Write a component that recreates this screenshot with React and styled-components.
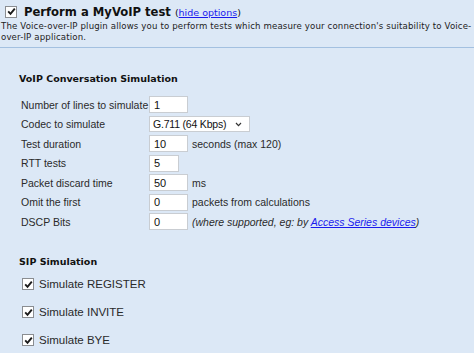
import React from 'react';
import styled, { createGlobalStyle } from 'styled-components';

const Global = createGlobalStyle`
  html, body {
    margin: 0;
    padding: 0;
    background: #dce8f6;
  }
  body {
    font-family: "DejaVu Sans", Verdana, sans-serif;
    color: #222;
  }
`;

const Page = styled.div`
  width: 474px;
  height: 353px;
  overflow: hidden;
  background: #dce8f6;
`;

const Header = styled.div`
  padding: 3px 0 5px 1px;
  border-bottom: 1px solid #a3c0e0;
`;

const TitleRow = styled.div`
  display: flex;
  align-items: center;
  gap: 7px;
  padding-left: 4px;
  height: 17px;
`;

const Title = styled.span`
  font-weight: bold;
  font-size: 11.6px;
  color: #111;
`;

const Small = styled.span`
  font-size: 9.5px;
  font-weight: normal;
  margin-left: 4px;
`;

const Link = styled.a`
  color: #1a1aee;
  text-decoration: underline;
`;

const Desc = styled.p`
  margin: 1px 0 0;
  font-size: 8.6px;
  letter-spacing: 0.14px;
  line-height: 10.5px;
  white-space: nowrap;
  color: #222;
`;

const Section = styled.div`
  padding-left: 19px;
`;

const Heading = styled.h3`
  margin: ${p => p.$top}px 0 0;
  font-size: 9.5px;
  font-weight: bold;
  color: #111;
  height: 14px;
  line-height: 14px;
`;

const Form = styled.div`
  display: grid;
  grid-template-columns: 128px auto;
  row-gap: 2.5px;
  margin-top: 10px;
  padding-left: 2px;
  font-family: "Liberation Sans", Arial, sans-serif;
  font-size: 10.5px;
  color: #2a2a2a;
`;

const Label = styled.div`
  display: flex;
  align-items: center;
  height: 17px;
  white-space: nowrap;
`;

const Field = styled.div`
  display: flex;
  align-items: center;
  gap: 4px;
  height: 17px;
  white-space: nowrap;
`;

const Input = styled.div`
  box-sizing: border-box;
  width: ${p => p.$w}px;
  height: 17px;
  background: #fff;
  border: 1px solid #c9cdd2;
  padding: 0 4px;
  display: flex;
  align-items: center;
  font-size: 11px;
  color: #111;
`;

const Select = styled.div`
  box-sizing: border-box;
  width: 101px;
  height: 16px;
  background: #fff;
  border: 1px solid #c9cdd2;
  padding: 0 7px 0 3px;
  display: flex;
  align-items: center;
  justify-content: space-between;
  font-size: 10.5px;
  letter-spacing: -0.2px;
  color: #111;
`;

const Suffix = styled.span`
  font-style: ${p => (p.$italic ? 'italic' : 'normal')};
`;

const CheckList = styled.div`
  display: flex;
  flex-direction: column;
  gap: 10px;
  margin-top: 6px;
  padding-left: 3px;
`;

const CheckRow = styled.label`
  display: flex;
  align-items: center;
  gap: 5px;
  height: 18px;
  font-family: "Liberation Sans", Arial, sans-serif;
  font-size: 11.5px;
  color: #2a2a2a;
`;

const BoxWrap = styled.span`
  box-sizing: border-box;
  width: 12px;
  height: 12px;
  background: #fff;
  border: 1px solid #8a8d91;
  display: inline-flex;
  align-items: center;
  justify-content: center;
  flex: none;
`;

function Check() {
  return (
    <BoxWrap>
      <svg width="9" height="9" viewBox="0 0 9 9">
        <path d="M1.2 4.4 L3.5 6.8 L7.8 1.6" fill="none" stroke="#1b1b1b" strokeWidth="1.9" />
      </svg>
    </BoxWrap>
  );
}

const Chevron = () => (
  <svg width="7" height="5" viewBox="0 0 7 5">
    <path d="M1 1 L3.5 3.6 L6 1" fill="none" stroke="#333" strokeWidth="1.2" />
  </svg>
);

const rows = [
  { label: 'Number of lines to simulate', value: '1', w: 39 },
  { label: 'Codec to simulate', select: 'G.711 (64 Kbps)' },
  { label: 'Test duration', value: '10', w: 39, suffix: 'seconds (max 120)' },
  { label: 'RTT tests', value: '5', w: 30 },
  { label: 'Packet discard time', value: '50', w: 39, suffix: 'ms' },
  { label: 'Omit the first', value: '0', w: 39, suffix: 'packets from calculations' },
  { label: 'DSCP Bits', value: '0', w: 39, dscp: true },
];

export default function App() {
  return (
    <Page>
      <Global />
      <Header>
        <TitleRow>
          <Check />
          <Title>
            Perform a MyVoIP test
            <Small>
              (<Link href="#">hide options</Link>)
            </Small>
          </Title>
        </TitleRow>
        <Desc>
          The Voice-over-IP plugin allows you to perform tests which measure your connection's suitability to Voice-
          <br />
          over-IP application.
        </Desc>
      </Header>

      <Section>
        <Heading $top={24}>VoIP Conversation Simulation</Heading>
        <Form>
          {rows.map(r => (
            <React.Fragment key={r.label}>
              <Label>{r.label}</Label>
              <Field>
                {r.select ? (
                  <Select>
                    {r.select}
                    <Chevron />
                  </Select>
                ) : (
                  <Input $w={r.w}>{r.value}</Input>
                )}
                {r.suffix && <Suffix>{r.suffix}</Suffix>}
                {r.dscp && (
                  <Suffix $italic>
                    (where supported, eg: by <Link href="#">Access Series devices</Link>)
                  </Suffix>
                )}
              </Field>
            </React.Fragment>
          ))}
        </Form>

        <Heading $top={25}>SIP Simulation</Heading>
        <CheckList>
          <CheckRow><Check />Simulate REGISTER</CheckRow>
          <CheckRow><Check />Simulate INVITE</CheckRow>
          <CheckRow><Check />Simulate BYE</CheckRow>
        </CheckList>
      </Section>
    </Page>
  );
}
